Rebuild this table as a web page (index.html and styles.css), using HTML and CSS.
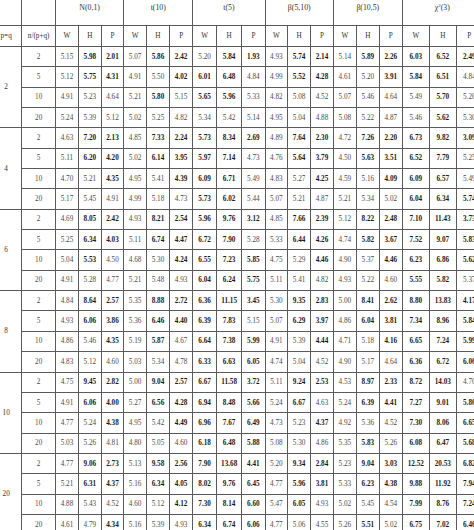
FILE: index.html
```html
<!DOCTYPE html>
<html>
<head>
<meta charset="utf-8">
<link rel="stylesheet" href="styles.css">
</head>
<body>
<table class="tbl">
<colgroup>
<col class="c0"><col class="c1">
<col class="w230"><col class="w227"><col class="w226">
<col class="w227"><col class="w230"><col class="w233">
<col class="w237"><col class="w253"><col class="w232">
<col class="w228"><col class="w227"><col class="w230">
<col class="w227"><col class="w233"><col class="w227">
<col class="w273"><col class="w267"><col class="w263">
</colgroup>
<thead>
<tr class="h1"><th class="top0"></th><th></th><th colspan="3">N(0,1)</th><th colspan="3">t(10)</th><th colspan="3">t(5)</th><th colspan="3">β(5,10)</th><th colspan="3">β(10,5)</th><th colspan="3">χ<sup>2</sup>(3)</th></tr>
<tr class="h2"><th class="bot0">p=q</th><th>n/(p+q)</th><th>W</th><th>H</th><th>P</th><th>W</th><th>H</th><th>P</th><th>W</th><th>H</th><th>P</th><th>W</th><th>H</th><th>P</th><th>W</th><th>H</th><th>P</th><th>W</th><th>H</th><th>P</th></tr>
</thead>
<tbody>
<tr><td class="g" rowspan="4">2</td><td>2</td><td>5.15</td><td class="b">5.98</td><td class="b">2.01</td><td>5.07</td><td class="b">5.86</td><td class="b">2.42</td><td>5.20</td><td class="b">5.84</td><td class="b">1.93</td><td>4.93</td><td class="b">5.74</td><td class="b">2.14</td><td>5.14</td><td class="b">5.89</td><td class="b">2.26</td><td class="b">6.03</td><td class="b">6.52</td><td class="b">2.49</td></tr>
<tr><td>5</td><td>5.12</td><td class="b">5.75</td><td class="b">4.31</td><td>4.91</td><td>5.50</td><td class="b">4.02</td><td class="b">6.01</td><td class="b">6.48</td><td>4.84</td><td>4.99</td><td class="b">5.52</td><td class="b">4.28</td><td>4.61</td><td>5.20</td><td class="b">3.91</td><td class="b">5.84</td><td class="b">6.51</td><td>4.84</td></tr>
<tr><td>10</td><td>4.91</td><td>5.23</td><td>4.64</td><td>5.21</td><td class="b">5.80</td><td>5.15</td><td class="b">5.65</td><td class="b">5.96</td><td>5.33</td><td>4.82</td><td>5.08</td><td>4.52</td><td>5.07</td><td>5.46</td><td>4.64</td><td>5.49</td><td class="b">5.70</td><td>5.20</td></tr>
<tr><td>20</td><td>5.24</td><td>5.39</td><td>5.12</td><td>5.02</td><td>5.25</td><td>4.82</td><td>5.34</td><td>5.42</td><td>5.14</td><td>4.95</td><td>5.04</td><td>4.88</td><td>5.08</td><td>5.22</td><td>4.87</td><td>5.46</td><td class="b">5.62</td><td>5.30</td></tr>

<tr><td class="g" rowspan="4">4</td><td>2</td><td>4.63</td><td class="b">7.20</td><td class="b">2.13</td><td>4.85</td><td class="b">7.33</td><td class="b">2.24</td><td class="b">5.73</td><td class="b">8.34</td><td class="b">2.69</td><td>4.89</td><td class="b">7.64</td><td class="b">2.30</td><td>4.72</td><td class="b">7.26</td><td class="b">2.20</td><td class="b">6.73</td><td class="b">9.82</td><td class="b">3.09</td></tr>
<tr><td>5</td><td>5.11</td><td class="b">6.20</td><td class="b">4.20</td><td>5.02</td><td class="b">6.14</td><td class="b">3.95</td><td class="b">5.97</td><td class="b">7.14</td><td>4.73</td><td>4.76</td><td class="b">5.64</td><td class="b">3.79</td><td>4.50</td><td class="b">5.63</td><td class="b">3.51</td><td class="b">6.52</td><td class="b">7.79</td><td>5.25</td></tr>
<tr><td>10</td><td>4.70</td><td>5.21</td><td class="b">4.35</td><td>4.95</td><td>5.41</td><td class="b">4.39</td><td class="b">6.09</td><td class="b">6.71</td><td>5.49</td><td>4.83</td><td>5.27</td><td class="b">4.25</td><td>4.59</td><td>5.16</td><td class="b">4.09</td><td class="b">6.09</td><td class="b">6.57</td><td>5.49</td></tr>
<tr><td>20</td><td>5.17</td><td>5.45</td><td>4.91</td><td>4.99</td><td>5.18</td><td>4.73</td><td class="b">5.73</td><td class="b">6.02</td><td>5.44</td><td>5.07</td><td>5.21</td><td>4.87</td><td>5.21</td><td>5.34</td><td>5.02</td><td class="b">6.04</td><td class="b">6.34</td><td class="b">5.74</td></tr>

<tr><td class="g" rowspan="4">6</td><td>2</td><td>4.69</td><td class="b">8.05</td><td class="b">2.42</td><td>4.93</td><td class="b">8.21</td><td class="b">2.54</td><td class="b">5.96</td><td class="b">9.76</td><td class="b">3.12</td><td>4.85</td><td class="b">7.66</td><td class="b">2.39</td><td>5.12</td><td class="b">8.22</td><td class="b">2.48</td><td class="b">7.10</td><td class="b">11.43</td><td class="b">3.73</td></tr>
<tr><td>5</td><td>5.25</td><td class="b">6.34</td><td class="b">4.03</td><td>5.11</td><td class="b">6.74</td><td class="b">4.47</td><td class="b">6.72</td><td class="b">7.90</td><td>5.28</td><td>5.33</td><td class="b">6.44</td><td class="b">4.26</td><td>4.74</td><td class="b">5.82</td><td class="b">3.67</td><td class="b">7.52</td><td class="b">9.07</td><td class="b">5.83</td></tr>
<tr><td>10</td><td>5.04</td><td class="b">5.53</td><td>4.50</td><td>4.68</td><td>5.30</td><td class="b">4.24</td><td class="b">6.55</td><td class="b">7.23</td><td class="b">5.85</td><td>4.75</td><td>5.29</td><td class="b">4.46</td><td>4.90</td><td>5.37</td><td class="b">4.46</td><td class="b">6.23</td><td class="b">6.86</td><td class="b">5.62</td></tr>
<tr><td>20</td><td>4.91</td><td>5.28</td><td>4.77</td><td>5.21</td><td>5.48</td><td>4.93</td><td class="b">6.04</td><td class="b">6.24</td><td class="b">5.75</td><td>5.11</td><td>5.41</td><td>4.82</td><td>4.93</td><td>5.22</td><td>4.60</td><td class="b">5.55</td><td class="b">5.82</td><td>5.37</td></tr>

<tr><td class="g" rowspan="4">8</td><td>2</td><td>4.84</td><td class="b">8.64</td><td class="b">2.57</td><td>5.35</td><td class="b">8.88</td><td class="b">2.72</td><td class="b">6.36</td><td class="b">11.15</td><td class="b">3.45</td><td>5.30</td><td class="b">9.35</td><td class="b">2.83</td><td>5.00</td><td class="b">8.41</td><td class="b">2.62</td><td class="b">8.80</td><td class="b">13.83</td><td class="b">4.17</td></tr>
<tr><td>5</td><td>4.93</td><td class="b">6.06</td><td class="b">3.86</td><td>5.36</td><td class="b">6.46</td><td class="b">4.40</td><td class="b">6.39</td><td class="b">7.83</td><td>5.15</td><td>5.07</td><td class="b">6.29</td><td class="b">3.97</td><td>4.86</td><td class="b">6.04</td><td class="b">3.81</td><td class="b">7.34</td><td class="b">8.96</td><td class="b">5.84</td></tr>
<tr><td>10</td><td>4.86</td><td>5.46</td><td class="b">4.35</td><td>5.19</td><td class="b">5.87</td><td>4.67</td><td class="b">6.64</td><td class="b">7.38</td><td class="b">5.99</td><td>4.91</td><td>5.39</td><td class="b">4.44</td><td>4.71</td><td>5.18</td><td class="b">4.16</td><td class="b">6.65</td><td class="b">7.24</td><td class="b">5.99</td></tr>
<tr><td>20</td><td>4.83</td><td>5.12</td><td>4.60</td><td>5.03</td><td>5.34</td><td>4.78</td><td class="b">6.33</td><td class="b">6.63</td><td class="b">6.05</td><td>4.74</td><td>5.04</td><td>4.52</td><td>4.90</td><td>5.17</td><td>4.64</td><td class="b">6.36</td><td class="b">6.72</td><td class="b">6.06</td></tr>

<tr><td class="g" rowspan="4">10</td><td>2</td><td>4.75</td><td class="b">9.45</td><td class="b">2.82</td><td>5.00</td><td class="b">9.04</td><td class="b">2.57</td><td class="b">6.67</td><td class="b">11.58</td><td class="b">3.72</td><td>5.11</td><td class="b">9.24</td><td class="b">2.53</td><td>4.53</td><td class="b">8.97</td><td class="b">2.33</td><td class="b">8.72</td><td class="b">14.03</td><td>4.70</td></tr>
<tr><td>5</td><td>4.91</td><td class="b">6.06</td><td class="b">4.00</td><td>5.27</td><td class="b">6.56</td><td class="b">4.28</td><td class="b">6.94</td><td class="b">8.48</td><td class="b">5.66</td><td>5.24</td><td class="b">6.67</td><td>4.63</td><td>5.24</td><td class="b">6.39</td><td class="b">4.41</td><td class="b">7.27</td><td class="b">9.01</td><td class="b">5.86</td></tr>
<tr><td>10</td><td>4.77</td><td>5.24</td><td class="b">4.38</td><td>4.95</td><td>5.42</td><td class="b">4.49</td><td class="b">6.96</td><td class="b">7.67</td><td class="b">6.49</td><td>4.73</td><td>5.23</td><td class="b">4.37</td><td>4.92</td><td>5.36</td><td>4.52</td><td class="b">7.30</td><td class="b">8.06</td><td class="b">6.65</td></tr>
<tr><td>20</td><td>5.03</td><td>5.26</td><td>4.81</td><td>4.80</td><td>5.05</td><td>4.60</td><td class="b">6.18</td><td class="b">6.48</td><td class="b">5.88</td><td>5.08</td><td>5.30</td><td>4.86</td><td>5.35</td><td class="b">5.83</td><td>5.26</td><td class="b">6.08</td><td class="b">6.47</td><td class="b">5.68</td></tr>

<tr><td class="g" rowspan="4">20</td><td>2</td><td>4.77</td><td class="b">9.06</td><td class="b">2.73</td><td>5.13</td><td class="b">9.58</td><td class="b">2.56</td><td class="b">7.90</td><td class="b">13.68</td><td class="b">4.41</td><td>5.20</td><td class="b">9.34</td><td class="b">2.84</td><td>5.23</td><td class="b">9.04</td><td class="b">3.03</td><td class="b">12.52</td><td class="b">20.53</td><td class="b">6.82</td></tr>
<tr><td>5</td><td>5.21</td><td class="b">6.31</td><td class="b">4.37</td><td>5.16</td><td class="b">6.34</td><td class="b">4.05</td><td class="b">8.02</td><td class="b">9.76</td><td class="b">6.45</td><td>4.77</td><td class="b">5.96</td><td class="b">3.81</td><td>5.33</td><td class="b">6.23</td><td class="b">4.38</td><td class="b">9.88</td><td class="b">11.92</td><td class="b">7.94</td></tr>
<tr><td>10</td><td>4.88</td><td>5.43</td><td>4.52</td><td>4.60</td><td>5.12</td><td class="b">4.12</td><td class="b">7.30</td><td class="b">8.14</td><td class="b">6.60</td><td>5.47</td><td class="b">6.05</td><td>4.93</td><td>5.02</td><td>5.45</td><td>4.54</td><td class="b">7.99</td><td class="b">8.76</td><td class="b">7.24</td></tr>
<tr><td>20</td><td>4.61</td><td>4.79</td><td class="b">4.34</td><td>5.16</td><td>5.39</td><td>4.93</td><td class="b">6.34</td><td class="b">6.74</td><td class="b">6.06</td><td>4.77</td><td>5.06</td><td>4.55</td><td>5.26</td><td class="b">5.51</td><td>5.02</td><td class="b">6.75</td><td class="b">7.02</td><td class="b">6.46</td></tr>
</tbody>
</table>
</body>
</html>
```

FILE: styles.css
```css
html, body {
  margin: 0;
  padding: 0;
  background: #ffffff;
  overflow: hidden;
}

.tbl {
  border-collapse: collapse;
  table-layout: fixed;
  width: 492px;
  margin-left: -10px;
  margin-top: -11px;
  font-family: "Liberation Serif", "Times New Roman", serif;
  font-size: 7.2px;
  color: #4a4a4a;
}

.c0 { width: 31.3px; }
.c1 { width: 33.7px; }
.w226 { width: 22.6px; }
.w227 { width: 22.7px; }
.w228 { width: 22.8px; }
.w230 { width: 23px; }
.w232 { width: 23.2px; }
.w233 { width: 23.3px; }
.w237 { width: 23.7px; }
.w253 { width: 25.3px; }
.w263 { width: 26.3px; }
.w267 { width: 26.7px; }
.w273 { width: 27.3px; }

.tbl th,
.tbl td {
  border: 1px solid #5a5a5a;
  padding: 0;
  text-align: center;
  vertical-align: middle;
  line-height: 8px;
  white-space: nowrap;
  overflow: hidden;
}

.tbl th {
  font-weight: normal;
  color: #333;
}

.h1 { height: 36px; }
.h1 th { font-size: 7.8px; }
.h2 { height: 21px; }
.tbl tbody tr { height: 20.35px; }

.top0 { border-bottom-style: hidden; }
.bot0 { border-top-style: hidden; }

.tbl sup {
  font-size: 5px;
  line-height: 0;
  vertical-align: 3px;
}

.tbl td.b {
  font-weight: bold;
  color: #1a1a1a;
}

.tbl td.g {
  color: #333;
}
```
